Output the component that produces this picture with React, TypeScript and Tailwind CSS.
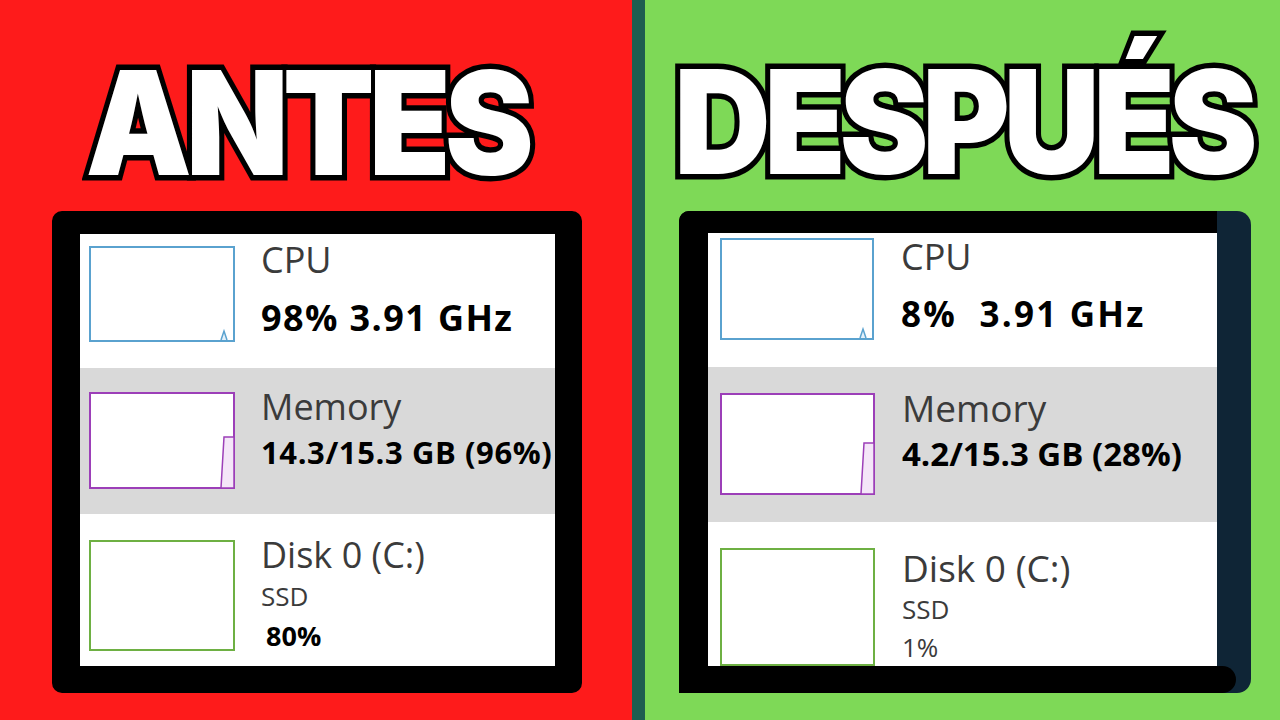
import React from "react";

const titleCls =
  "block text-center font-['Inter','Liberation_Sans',sans-serif] font-black text-[144px] leading-none text-white scale-x-[0.93] [-webkit-text-stroke:11px_black] [paint-order:stroke_fill]";

const label = "font-['Open_Sans','Noto_Sans',sans-serif] text-[#3b3b3b] leading-none";
const value = "font-['Open_Sans','Noto_Sans',sans-serif] font-bold text-black leading-none";

const Graph = ({
  w,
  h,
  color,
  kind,
}: {
  w: number;
  h: number;
  color: string;
  kind: "cpu" | "mem" | "disk";
}) => (
  <svg width={w} height={h} viewBox={`0 0 ${w} ${h}`} className="block shrink-0">
    <rect x={1} y={1} width={w - 2} height={h - 2} fill="white" stroke={color} strokeWidth={2} />
    {kind === "cpu" && (
      <polyline
        points={`${w - 14},${h - 2} ${w - 11},${h - 11} ${w - 8},${h - 2}`}
        fill="#e4f1fa"
        stroke={color}
        strokeWidth={1.5}
      />
    )}
    {kind === "mem" && (
      <polygon
        points={`${w - 11},${h - 52} ${w - 1},${h - 52} ${w - 1},${h - 1} ${w - 14},${h - 1}`}
        fill="#f4e6f8"
        stroke={color}
        strokeWidth={1.5}
      />
    )}
  </svg>
);

const Before = () => (
  <div className="flex w-[632px] shrink-0 flex-col bg-[#fe1b1b] pt-[51px]">
    <div className={`${titleCls} pr-[20px] tracking-[-0.045em]`}>ANTES</div>
    <div className="ml-[52px] mt-[16px] w-[530px] rounded-[10px] border-black border-l-[28px] border-r-[27px] border-t-[23px] border-b-[27px] bg-white">
      <div className="flex h-[432px] flex-col overflow-hidden">
        <div className="flex h-[134px] shrink-0 bg-white">
          <div className="ml-[9px] mt-[12px]">
            <Graph w={146} h={96} color="#5aa2cf" kind="cpu" />
          </div>
          <div className="ml-[26px] flex flex-col pt-[8px]">
            <span className={`${label} text-[36px]`}>CPU</span>
            <span className={`${value} mt-[22px] whitespace-nowrap text-[36px] tracking-[1.4px]`}>98% 3.91 GHz</span>
          </div>
        </div>
        <div className="flex h-[146px] shrink-0 bg-[#d9d9d9]">
          <div className="ml-[9px] mt-[24px]">
            <Graph w={146} h={97} color="#9c3fb8" kind="mem" />
          </div>
          <div className="ml-[26px] flex flex-col pt-[21px]">
            <span className={`${label} text-[36px]`}>Memory</span>
            <span className={`${value} mt-[12px] whitespace-nowrap text-[31px] tracking-[0.6px]`}>14.3/15.3 GB (96%)</span>
          </div>
        </div>
        <div className="flex h-[152px] shrink-0 bg-white">
          <div className="ml-[9px] mt-[26px]">
            <Graph w={146} h={111} color="#6eb043" kind="disk" />
          </div>
          <div className="ml-[26px] flex flex-col pt-[23px]">
            <span className={`${label} text-[36px]`}>Disk 0 (C:)</span>
            <span className={`${label} mt-[10px] text-[26px]`}>SSD</span>
            <span className={`${value} ml-[5px] mt-[13px] text-[27px]`}>80%</span>
          </div>
        </div>
      </div>
    </div>
  </div>
);

const After = () => (
  <div className="flex flex-1 flex-col bg-[#7ed957] pt-[50px]">
    <div className={`${titleCls} tracking-[-0.05em]`}>DESPUÉS</div>
    <div className="relative ml-[34px] mt-[17px] flex w-[572px]">
      <div className="w-[538px] rounded-l-[10px] border-black border-l-[29px] border-t-[22px] border-b-[27px] bg-white">
        <div className="flex h-[433px] flex-col overflow-hidden">
          <div className="flex h-[134px] shrink-0 bg-white">
            <div className="ml-[12px] mt-[5px]">
              <Graph w={154} h={102} color="#5aa2cf" kind="cpu" />
            </div>
            <div className="ml-[27px] flex flex-col pt-[6px]">
              <span className={`${label} text-[36px]`}>CPU</span>
              <span className={`${value} mt-[21px] whitespace-pre text-[35px] tracking-[2.2px]`}>8%  3.91 GHz</span>
            </div>
          </div>
          <div className="flex h-[155px] shrink-0 bg-[#d9d9d9]">
            <div className="ml-[12px] mt-[26px]">
              <Graph w={155} h={102} color="#9c3fb8" kind="mem" />
            </div>
            <div className="ml-[27px] flex flex-col pt-[22px]">
              <span className={`${label} text-[37px]`}>Memory</span>
              <span className={`${value} mt-[11px] whitespace-nowrap text-[33px]`}>4.2/15.3 GB (28%)</span>
            </div>
          </div>
          <div className="flex h-[144px] shrink-0 bg-white">
            <div className="ml-[12px] mt-[26px]">
              <Graph w={155} h={118} color="#6eb043" kind="disk" />
            </div>
            <div className="ml-[27px] flex flex-col pt-[27px]">
              <span className={`${label} text-[37px]`}>Disk 0 (C:)</span>
              <span className={`${label} mt-[10px] text-[26px]`}>SSD</span>
              <span className={`${label} mt-[12px] text-[26px]`}>1%</span>
            </div>
          </div>
        </div>
      </div>
      <div className="w-[34px] rounded-r-[14px] bg-[#0f2536]" />
      {/* bottom bar sits over the navy edge */}
      <div className="absolute bottom-0 left-0 h-[27px] w-[557px] rounded-bl-[10px] rounded-r-full bg-black" />
    </div>
  </div>
);

export default function App() {
  return (
    <div className="flex h-[720px] w-[1280px] overflow-hidden">
      <Before />
      <div className="w-[13px] shrink-0 bg-[#1e5e50]" />
      <After />
    </div>
  );
}
